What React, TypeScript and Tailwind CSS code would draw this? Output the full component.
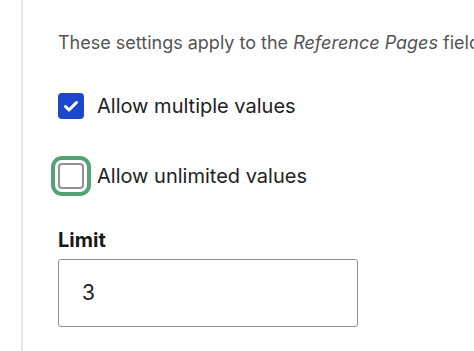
import React from 'react';

const font = { fontFamily: 'Inter, "Liberation Sans", sans-serif' };

function Checkbox({ checked, focused }: { checked: boolean; focused?: boolean }) {
  if (checked) {
    return (
      <span className="flex h-[26px] w-[26px] shrink-0 items-center justify-center rounded-[4px] bg-[#1b47cc]">
        <svg width="26" height="26" viewBox="0 0 26 26" fill="none">
          <path
            d="M7.5 13.5l3.5 3.5 7.5-7.5"
            stroke="#fff"
            strokeWidth="3"
            strokeLinecap="round"
            strokeLinejoin="round"
          />
        </svg>
      </span>
    );
  }
  return (
    <span
      className={
        'block h-[26px] w-[26px] shrink-0 rounded-[4px] border-2 border-[#939393] bg-white ' +
        (focused ? 'outline-4 outline-offset-[3px] outline-[#55a374] outline-solid' : '')
      }
    />
  );
}

export default function App() {
  return (
    <div className="flex h-[351px] w-full overflow-hidden bg-white" style={font}>
      <div className="w-[21px] shrink-0" />
      <div className="min-w-0 flex-1 overflow-hidden border-l-2 border-[#e8e8e8] pl-[35px]">
        <p className="mt-[31px] whitespace-nowrap text-[18px] leading-6 text-[#545454]">
          These settings apply to the <em>Reference Pages</em> field
        </p>

        <label className="mt-[38px] flex h-[26px] items-center gap-[13px] text-[20px] text-[#222]">
          <Checkbox checked />
          Allow multiple values
        </label>

        <label className="mt-[44px] flex h-[26px] items-center gap-[13px] text-[20px] text-[#222]">
          <Checkbox checked={false} focused />
          Allow unlimited values
        </label>

        <div className="mt-[39px] text-[20px] font-bold leading-6 text-[#1a1a1a]">Limit</div>

        <div className="mt-[7px] flex h-[68px] w-[300px] items-center rounded-[3px] border border-[#8e8e8e] pl-[23px] text-[21px] text-[#222]">
          3
        </div>
      </div>
    </div>
  );
}
